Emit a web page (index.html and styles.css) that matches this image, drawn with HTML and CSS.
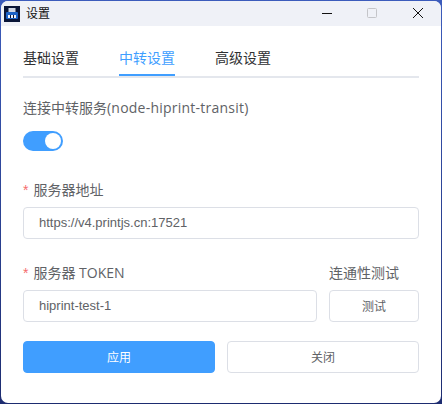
FILE: index.html
```html
<!DOCTYPE html>
<html lang="zh-CN">
<head>
<meta charset="utf-8">
<title>设置</title>
<link rel="stylesheet" href="styles.css">
</head>
<body>
<div class="window">
  <header class="titlebar">
    <svg class="app-icon" width="16" height="16" viewBox="0 0 16 16">
      <rect width="16" height="16" fill="#0a1638"/>
      <rect x="4.5" y="2" width="7" height="4" fill="#cfd6e4"/>
      <rect x="2" y="6" width="12" height="7" rx="1" fill="#1b62c8"/>
      <rect x="4" y="9" width="8" height="3" fill="#eef2fa"/>
      <rect x="6" y="9" width="1" height="3" fill="#0a1638"/>
      <rect x="9" y="9" width="1" height="3" fill="#0a1638"/>
    </svg>
    <span class="title">设置</span>
    <div class="win-controls">
      <svg class="ctl" width="46" height="25" viewBox="0 0 46 25"><path d="M18 12.5h10" stroke="#111" stroke-width="1"/></svg>
      <svg class="ctl" width="46" height="25" viewBox="0 0 46 25"><rect x="17.5" y="7.5" width="9" height="9" rx="1" fill="none" stroke="#c4c5c9"/></svg>
      <svg class="ctl" width="46" height="25" viewBox="0 0 46 25"><path d="M17 7l10 10M27 7L17 17" stroke="#111" stroke-width="1" fill="none"/></svg>
    </div>
  </header>
  <main class="content">
    <nav class="tabs">
      <div class="tab">基础设置</div>
      <div class="tab active">中转设置</div>
      <div class="tab">高级设置</div>
    </nav>
    <div class="label first">连接中转服务<span class="latin">(node-hiprint-transit)</span></div>
    <div class="switch"><span class="knob"></span></div>
    <div class="label addr"><span class="req">*</span>服务器地址</div>
    <input class="input" value="https://v4.printjs.cn:17521">
    <div class="row token-row">
      <div class="col grow">
        <div class="label"><span class="req">*</span>服务器 TOKEN</div>
        <input class="input" value="hiprint-test-1">
      </div>
      <div class="col side">
        <div class="label">连通性测试</div>
        <button class="btn">测试</button>
      </div>
    </div>
    <div class="actions">
      <button class="btn primary">应用</button>
      <button class="btn">关闭</button>
    </div>
  </main>
</div>
</body>
</html>
```
FILE: styles.css
```css
* { box-sizing: border-box; }
html, body { margin: 0; padding: 0; height: 404px; overflow: hidden; }
body {
  background: linear-gradient(#3c5cbc, #1d2c70);
  padding: 1px;
  font-family: "Liberation Sans", "Noto Sans CJK SC", sans-serif;
  font-size: 14px;
  color: #606266;
}
.window {
  height: 402px;
  background: #fff;
  border-radius: 7px;
  overflow: hidden;
}
.titlebar {
  height: 25px;
  background: #eff1f7;
  display: flex;
  align-items: center;
  padding-left: 3px;
}
.app-icon { flex: none; }
.title { margin-left: 6px; padding-bottom: 2px; font-size: 12px; color: #111; }
.win-controls { margin-left: auto; display: flex; margin-right: -1px; }
.ctl { display: block; }
.content { padding: 0 22px; }
.tabs {
  display: flex;
  gap: 40px;
  height: 52px;
  padding-top: 23px;
  border-bottom: 2px solid #e4e7ed;
}
.tab { height: 27px; line-height: 18px; font-size: 14px; color: #303133; }
.tab.active { color: #409eff; border-bottom: 2px solid #409eff; }
.label {
  font-family: "Open Sans", "Noto Sans CJK SC", sans-serif;
  font-size: 14px;
  line-height: 20px;
  color: #606266;
}
.latin { letter-spacing: 0.23px; }
.label.first { margin-top: 20px; }
.switch {
  width: 40px;
  height: 20px;
  margin-top: 13px;
  border-radius: 10px;
  background: #409eff;
  position: relative;
}
.knob {
  position: absolute;
  top: 2px;
  right: 2px;
  width: 16px;
  height: 16px;
  border-radius: 50%;
  background: #fff;
}
.label.addr { margin-top: 29px; margin-bottom: 7px; }
.req {
  font-family: "Liberation Sans", sans-serif;
  color: #f56c6c;
  margin-right: 5px;
}
.input {
  display: block;
  width: 100%;
  height: 32px;
  border: 1px solid #dcdfe6;
  border-radius: 4px;
  padding: 0 15px 2px;
  font-family: "Liberation Sans", sans-serif;
  font-size: 13px;
  color: #606266;
  background: #fff;
  outline: none;
}
.row { display: flex; gap: 12px; }
.token-row { margin-top: 24px; }
.col .label { margin-bottom: 7px; }
.grow { flex: 1; min-width: 0; }
.side { width: 90px; flex: none; }
.btn {
  display: block;
  width: 100%;
  height: 32px;
  border: 1px solid #dcdfe6;
  border-radius: 4px;
  background: #fff;
  color: #606266;
  font: inherit;
  font-size: 12px;
  padding: 0 0 2px;
}
.btn.primary { background: #409eff; border-color: #409eff; color: #fff; }
.actions { display: flex; gap: 12px; margin-top: 19px; }
```
